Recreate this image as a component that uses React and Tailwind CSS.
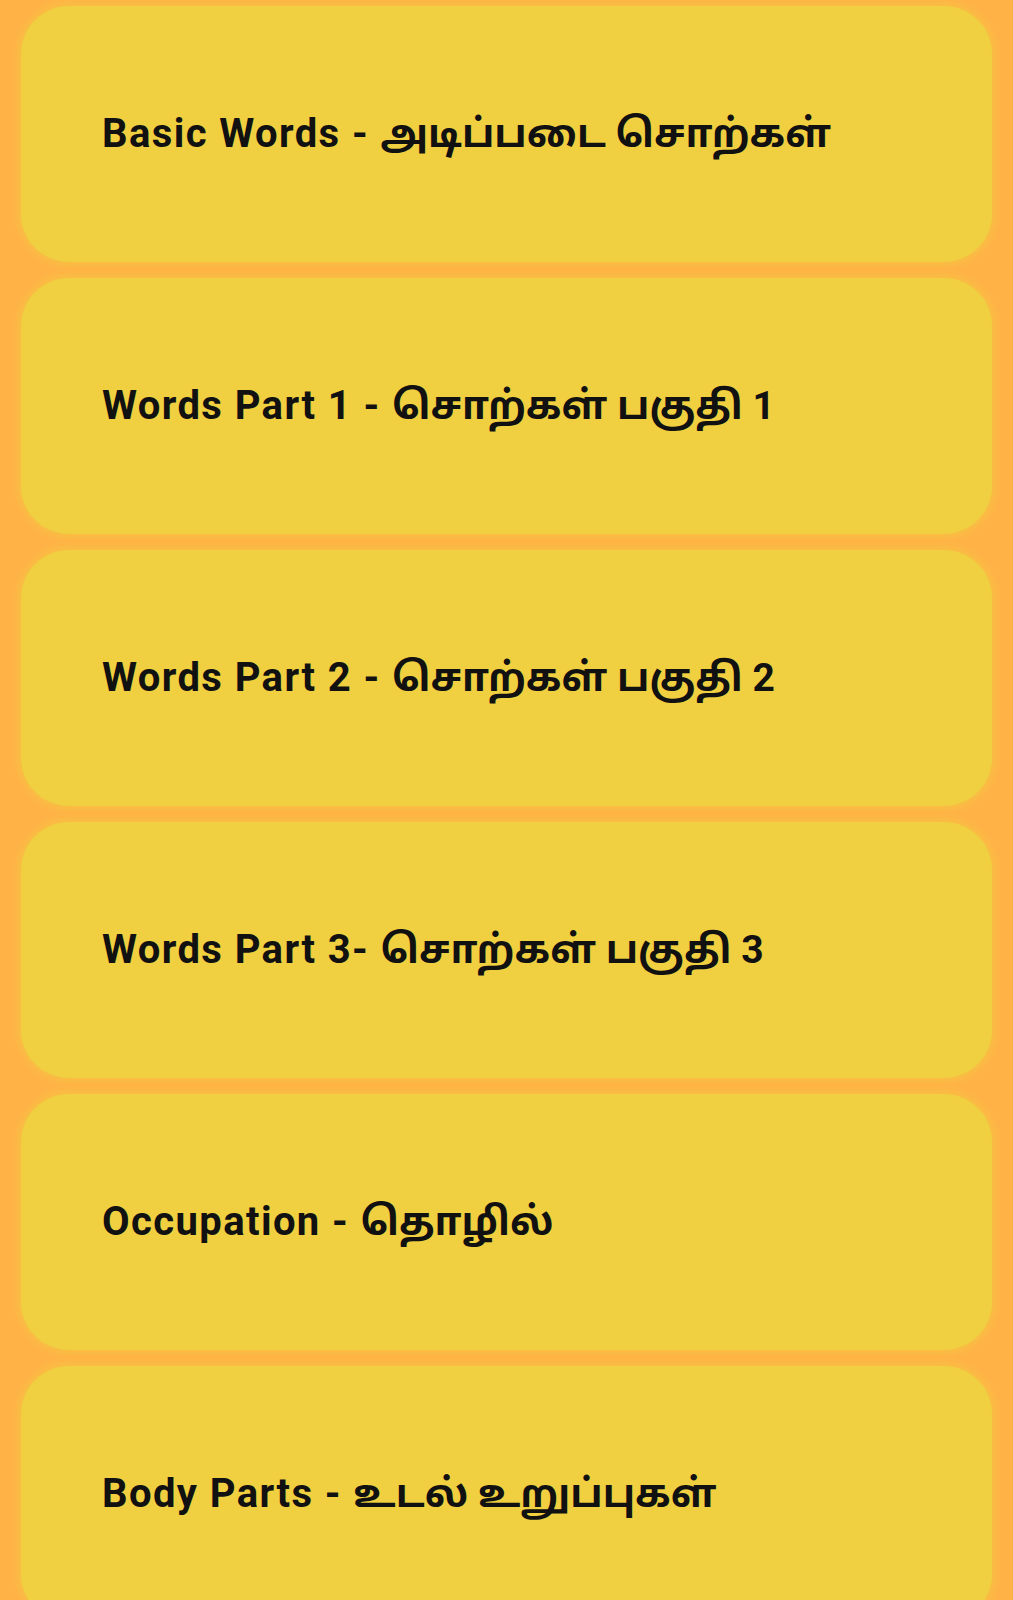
import React from 'react';

const topics = [
  { en: 'Basic Words - ', ta: 'அடிப்படை சொற்கள்' },
  { en: 'Words Part 1 - ', ta: 'சொற்கள் பகுதி 1' },
  { en: 'Words Part 2 - ', ta: 'சொற்கள் பகுதி 2' },
  { en: 'Words Part 3- ', ta: 'சொற்கள் பகுதி 3' },
  { en: 'Occupation - ', ta: 'தொழில்' },
  { en: 'Body Parts - ', ta: 'உடல் உறுப்புகள்' },
];

function TopicCard({ en, ta }) {
  return (
    <div className="h-[256px] shrink-0 rounded-[48px] bg-[#f0cf40] shadow-[0_0_8px_2px_rgba(240,207,64,0.6)] flex items-center pl-[81px]">
      <span className="font-bold text-[#111] whitespace-pre [font-family:Roboto,'Noto_Sans','Noto_Sans_Tamil',sans-serif]">
        <span className="text-[40px] tracking-[1.4px]">{en}</span>
        <span className="text-[39px]">{ta}</span>
      </span>
    </div>
  );
}

export default function App() {
  return (
    <div className="w-[1013px] h-[1600px] overflow-hidden bg-[#ffb347] px-[21px] pt-[6px] flex flex-col gap-[16px]">
      {topics.map((t) => (
        <TopicCard key={t.en} en={t.en} ta={t.ta} />
      ))}
    </div>
  );
}
